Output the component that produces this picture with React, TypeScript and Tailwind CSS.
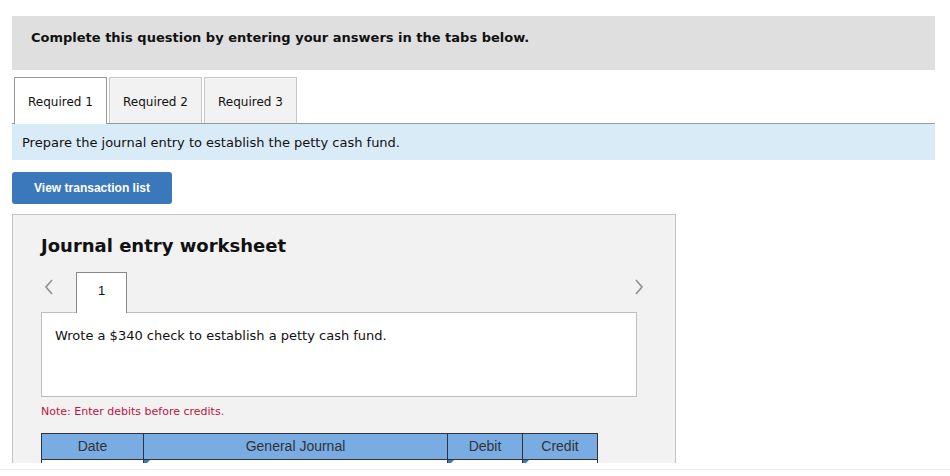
import React from "react";

const TABS = ["Required 1", "Required 2", "Required 3"];

const COLUMNS = [
  { key: "date", label: "Date", width: "w-[101px]" },
  { key: "journal", label: "General Journal", width: "w-[304px]" },
  { key: "debit", label: "Debit", width: "w-[75px]" },
  { key: "credit", label: "Credit", width: "w-[75px]" },
];

const Chevron = ({ dir }: { dir: "left" | "right" }) => (
  <svg width="10" height="16" viewBox="0 0 10 16" fill="none">
    <polyline
      points={dir === "left" ? "8,1 2,8 8,15" : "2,1 8,8 2,15"}
      stroke="#8c8f96"
      strokeWidth="1.6"
    />
  </svg>
);

const App = () => {
  return (
    <div className="w-[950px] h-[476px] bg-white overflow-hidden font-['DejaVu_Sans',sans-serif] text-[#111]">
      <div className="h-[463px] overflow-hidden pt-4 pl-3 pr-[15px]">
        {/* instructions */}
        <div className="h-[54px] bg-[#dfdfdf] pl-[19px] pt-[14px] text-[13px] leading-[16px] font-bold">
          Complete this question by entering your answers in the tabs below.
        </div>

        {/* tabs */}
        <div className="mt-[7px] flex gap-[2px] pl-[2px] border-b border-[#999]">
          {TABS.map((tab, i) => (
            <div
              key={tab}
              className={
                i === 0
                  ? "w-[93px] h-[47px] -mb-px bg-white border border-b-0 border-[#999] flex items-center justify-center text-[12px] pt-[2px]"
                  : "w-[93px] h-[46px] bg-[#f2f2f2] border border-b-0 border-[#c8c8c8] flex items-center justify-center text-[12px] pt-[2px]"
              }
            >
              {tab}
            </div>
          ))}
        </div>

        <div className="h-[36px] bg-[#daebf8] flex items-center pl-[10px] text-[13px] pt-[2px]">
          Prepare the journal entry to establish the petty cash fund.
        </div>

        <button className="mt-3 w-[160px] h-[32px] rounded-[3px] bg-[#3a77bb] text-white text-[12px] font-bold font-['Liberation_Sans',sans-serif] flex items-center justify-center">
          View transaction list
        </button>

        {/* worksheet */}
        <div className="mt-[10px] w-[664px] h-[300px] bg-[#f2f2f2] border border-[#c4c4c4] pl-[28px] pt-[19px]">
          <h2 className="text-[18px] leading-[24px] font-bold">Journal entry worksheet</h2>

          <div className="mt-[13px] w-[607px] flex items-end">
            <div className="w-[35px] h-[41px] flex items-center pl-[3px] pb-[9px]">
              <Chevron dir="left" />
            </div>
            <div className="relative z-10 -mb-px w-[51px] h-[41px] bg-white border border-b-0 border-[#888] flex justify-center pt-[8px] text-[13px] font-['Liberation_Sans',sans-serif]">
              1
            </div>
            <div className="flex-1" />
            <div className="w-[14px] h-[41px] flex items-center pb-[9px]">
              <Chevron dir="right" />
            </div>
          </div>

          <div className="w-[596px] h-[85px] bg-white border border-[#bdbdbd] pl-[13px] pt-[14px] text-[13px] leading-[18px]">
            Wrote a $340 check to establish a petty cash fund.
          </div>

          <p className="mt-[7px] text-[11px] leading-[16px] text-[#c0143c]">
            Note: Enter debits before credits.
          </p>

          <div className="mt-[13px] w-[557px] font-['Liberation_Sans',sans-serif]">
            <div className="flex h-[27px] bg-[#79ace3] border border-[#333] text-[14px] text-[#333]">
              {COLUMNS.map((col, i) => (
                <div
                  key={col.key}
                  className={`${col.width} flex items-center justify-center ${i > 0 ? "border-l border-[#333]" : ""}`}
                >
                  {col.label}
                </div>
              ))}
            </div>
            <div className="flex h-[30px] bg-white border-x border-[#333]">
              {COLUMNS.map((col, i) => (
                <div key={col.key} className={`${col.width} relative ${i > 0 ? "border-l border-[#333]" : ""}`}>
                  {i > 0 && (
                    <span className="absolute left-0 top-0 w-0 h-0 border-t-[6px] border-t-[#3a77bb] border-r-[6px] border-r-transparent" />
                  )}
                </div>
              ))}
            </div>
          </div>
        </div>
      </div>
      <div className="mt-[6px] h-px bg-[#ececec]" />
    </div>
  );
};

export default App;
